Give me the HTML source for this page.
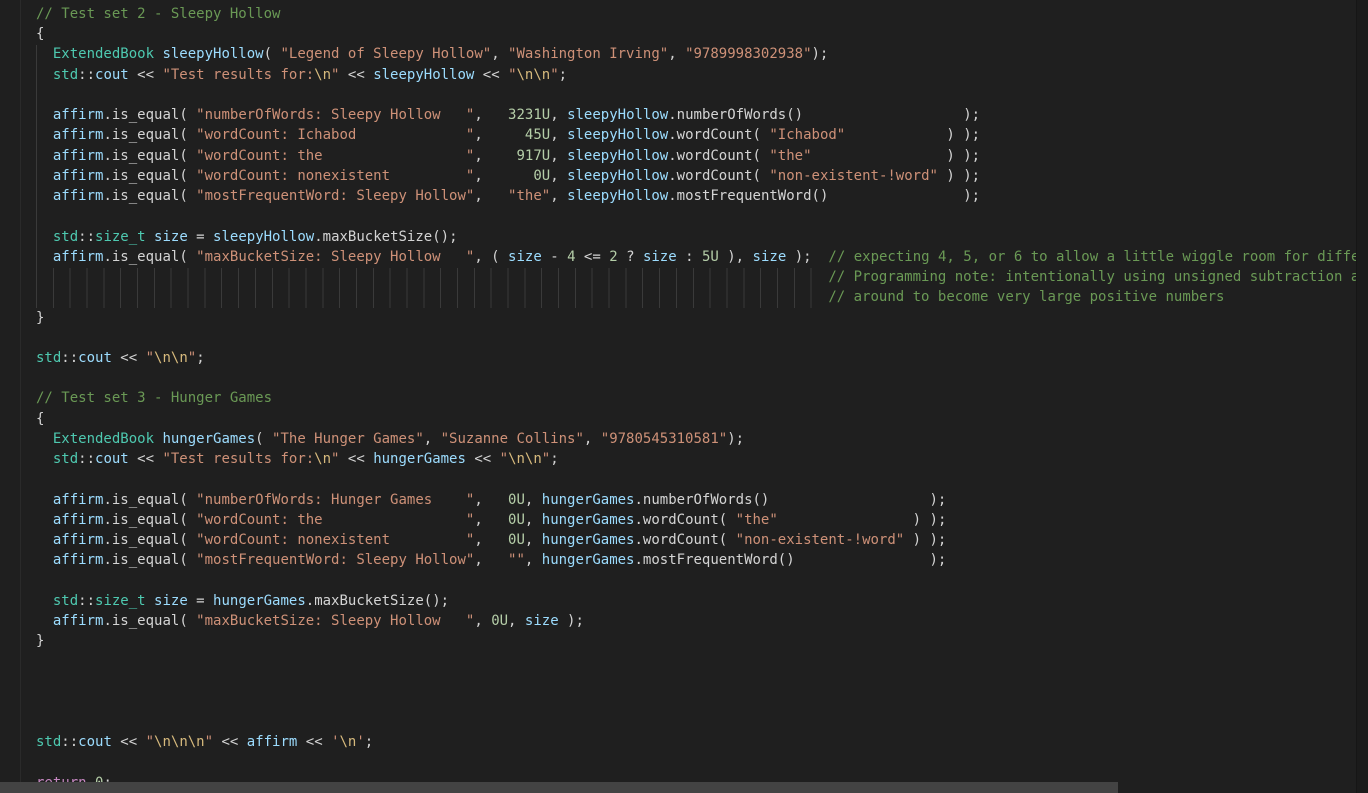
<!DOCTYPE html>
<html><head><meta charset="utf-8"><style>
html,body{margin:0;padding:0;background:#1f1f1f;width:1368px;height:793px;overflow:hidden}
#ed{position:absolute;left:0;top:0;width:1356px;height:793px;overflow:hidden}
pre{position:absolute;left:36px;top:4px;margin:0;font-family:"DejaVu Sans Mono","Liberation Mono",monospace;font-size:14px;line-height:20.24px;color:#d4d4d4;white-space:pre}
.c{color:#6a9955}.t{color:#4ec9b0}.v{color:#9cdcfe}.f{color:#d4d4d4}.s{color:#ce9178}.e{color:#d7ba7d}.n{color:#b5cea8}.k{color:#c586c0}
.g{position:absolute;width:1px;background:#3a3a3a}
.gg{position:absolute;left:36px;width:776px;height:40.5px;top:267.6px;background:repeating-linear-gradient(90deg,#3a3a3a 0 1px,transparent 1px 16.84px)}
</style></head><body>
<div id="ed">
<div style="position:absolute;left:20px;top:0;width:1px;height:793px;background:#2a2a2a"></div>
<div class="g" style="left:36px;top:44.5px;height:263px"></div>
<div class="gg"></div>
<pre><span class="c">// Test set 2 - Sleepy Hollow</span>
{
  <span class="t">ExtendedBook</span> <span class="v">sleepyHollow</span>( <span class="s">"Legend of Sleepy Hollow"</span>, <span class="s">"Washington Irving"</span>, <span class="s">"9789998302938"</span>);
  <span class="t">std</span>::<span class="v">cout</span> &lt;&lt; <span class="s">"Test results for:<span class="e">\n</span>"</span> &lt;&lt; <span class="v">sleepyHollow</span> &lt;&lt; <span class="s">"<span class="e">\n\n</span>"</span>;

  <span class="v">affirm</span>.<span class="f">is_equal</span>( <span class="s">"numberOfWords: Sleepy Hollow   "</span>,   <span class="n">3231U</span>, <span class="v">sleepyHollow</span>.<span class="f">numberOfWords</span>()                   );
  <span class="v">affirm</span>.<span class="f">is_equal</span>( <span class="s">"wordCount: Ichabod             "</span>,     <span class="n">45U</span>, <span class="v">sleepyHollow</span>.<span class="f">wordCount</span>( <span class="s">"Ichabod"</span>            ) );
  <span class="v">affirm</span>.<span class="f">is_equal</span>( <span class="s">"wordCount: the                 "</span>,    <span class="n">917U</span>, <span class="v">sleepyHollow</span>.<span class="f">wordCount</span>( <span class="s">"the"</span>                ) );
  <span class="v">affirm</span>.<span class="f">is_equal</span>( <span class="s">"wordCount: nonexistent         "</span>,      <span class="n">0U</span>, <span class="v">sleepyHollow</span>.<span class="f">wordCount</span>( <span class="s">"non-existent-!word"</span> ) );
  <span class="v">affirm</span>.<span class="f">is_equal</span>( <span class="s">"mostFrequentWord: Sleepy Hollow"</span>,   <span class="s">"the"</span>, <span class="v">sleepyHollow</span>.<span class="f">mostFrequentWord</span>()                );

  <span class="t">std</span>::<span class="t">size_t</span> <span class="v">size</span> = <span class="v">sleepyHollow</span>.<span class="f">maxBucketSize</span>();
  <span class="v">affirm</span>.<span class="f">is_equal</span>( <span class="s">"maxBucketSize: Sleepy Hollow   "</span>, ( <span class="v">size</span> - <span class="n">4</span> &lt;= <span class="n">2</span> ? <span class="v">size</span> : <span class="n">5U</span> ), <span class="v">size</span> );  <span class="c">// expecting 4, 5, or 6 to allow a little wiggle room for differences in hashing</span>
                                                                                              <span class="c">// Programming note: intentionally using unsigned subtraction and letting negatives wrap</span>
                                                                                              <span class="c">// around to become very large positive numbers</span>
}

<span class="t">std</span>::<span class="v">cout</span> &lt;&lt; <span class="s">"<span class="e">\n\n</span>"</span>;

<span class="c">// Test set 3 - Hunger Games</span>
{
  <span class="t">ExtendedBook</span> <span class="v">hungerGames</span>( <span class="s">"The Hunger Games"</span>, <span class="s">"Suzanne Collins"</span>, <span class="s">"9780545310581"</span>);
  <span class="t">std</span>::<span class="v">cout</span> &lt;&lt; <span class="s">"Test results for:<span class="e">\n</span>"</span> &lt;&lt; <span class="v">hungerGames</span> &lt;&lt; <span class="s">"<span class="e">\n\n</span>"</span>;

  <span class="v">affirm</span>.<span class="f">is_equal</span>( <span class="s">"numberOfWords: Hunger Games    "</span>,   <span class="n">0U</span>, <span class="v">hungerGames</span>.<span class="f">numberOfWords</span>()                   );
  <span class="v">affirm</span>.<span class="f">is_equal</span>( <span class="s">"wordCount: the                 "</span>,   <span class="n">0U</span>, <span class="v">hungerGames</span>.<span class="f">wordCount</span>( <span class="s">"the"</span>                ) );
  <span class="v">affirm</span>.<span class="f">is_equal</span>( <span class="s">"wordCount: nonexistent         "</span>,   <span class="n">0U</span>, <span class="v">hungerGames</span>.<span class="f">wordCount</span>( <span class="s">"non-existent-!word"</span> ) );
  <span class="v">affirm</span>.<span class="f">is_equal</span>( <span class="s">"mostFrequentWord: Sleepy Hollow"</span>,   <span class="s">""</span>, <span class="v">hungerGames</span>.<span class="f">mostFrequentWord</span>()                );

  <span class="t">std</span>::<span class="t">size_t</span> <span class="v">size</span> = <span class="v">hungerGames</span>.<span class="f">maxBucketSize</span>();
  <span class="v">affirm</span>.<span class="f">is_equal</span>( <span class="s">"maxBucketSize: Sleepy Hollow   "</span>, <span class="n">0U</span>, <span class="v">size</span> );
}




<span class="t">std</span>::<span class="v">cout</span> &lt;&lt; <span class="s">"<span class="e">\n\n\n</span>"</span> &lt;&lt; <span class="v">affirm</span> &lt;&lt; <span class="s">'<span class="e">\n</span>'</span>;

<span class="k">return</span> <span class="n">0</span>;</pre>
<div style="position:absolute;left:0;top:782px;width:1118px;height:11px;background:#434343"></div>
</div>
<div style="position:absolute;left:1356px;top:0;width:12px;height:793px;background:#1b1b1b;border-left:1px solid #161616"></div>
</body></html>
